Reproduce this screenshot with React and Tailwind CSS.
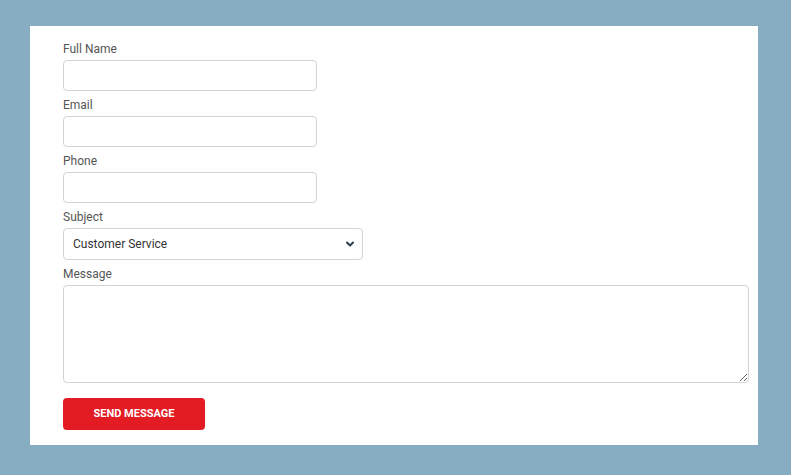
import { ChevronDown } from 'lucide-react';

const labelCls = 'block text-[12px] leading-[18px] text-[#555555] mb-[2px]';
const inputCls = 'block w-[254px] h-[31px] rounded-[4px] border border-[#d4d4d4] bg-white px-2 text-[12px] outline-none';

function Field({ label, children }) {
  return (
    <div className="mb-[5px]">
      <label className={labelCls}>{label}</label>
      {children}
    </div>
  );
}

export default function App() {
  return (
    <div className="min-h-screen bg-[#87adc2] pt-[26px] pl-[30px]" style={{ fontFamily: 'Roboto, "Liberation Sans", sans-serif' }}>
      <div className="w-[728px] h-[419px] bg-white pt-[14px] pl-[33px]">
        <form onSubmit={(e) => e.preventDefault()}>
          <Field label="Full Name">
            <input type="text" className={inputCls} />
          </Field>
          <Field label="Email">
            <input type="email" className={inputCls} />
          </Field>
          <Field label="Phone">
            <input type="tel" className={inputCls} />
          </Field>
          <Field label="Subject">
            <div className="relative w-[300px]">
              <select className="block w-full h-[32px] appearance-none rounded-[4px] border border-[#d4d4d4] bg-white pl-[9px] pr-8 text-[12px] text-[#333333] outline-none">
                <option>Customer Service</option>
                <option>Sales</option>
                <option>Support</option>
              </select>
              <ChevronDown className="pointer-events-none absolute right-[7px] top-1/2 -translate-y-1/2 w-[12px] h-[12px] text-[#2c3e50]" strokeWidth={4} />
            </div>
          </Field>
          <Field label="Message">
            <textarea className="block w-[686px] h-[98px] rounded-[4px] border border-[#d4d4d4] bg-white p-2 text-[12px] outline-none" />
          </Field>
          <button
            type="submit"
            className="mt-[15px] block w-[142px] h-[32px] rounded-[4px] bg-[#e31b23] text-white text-[11px] font-bold uppercase tracking-[0px]"
          >
            Send Message
          </button>
        </form>
      </div>
    </div>
  );
}
